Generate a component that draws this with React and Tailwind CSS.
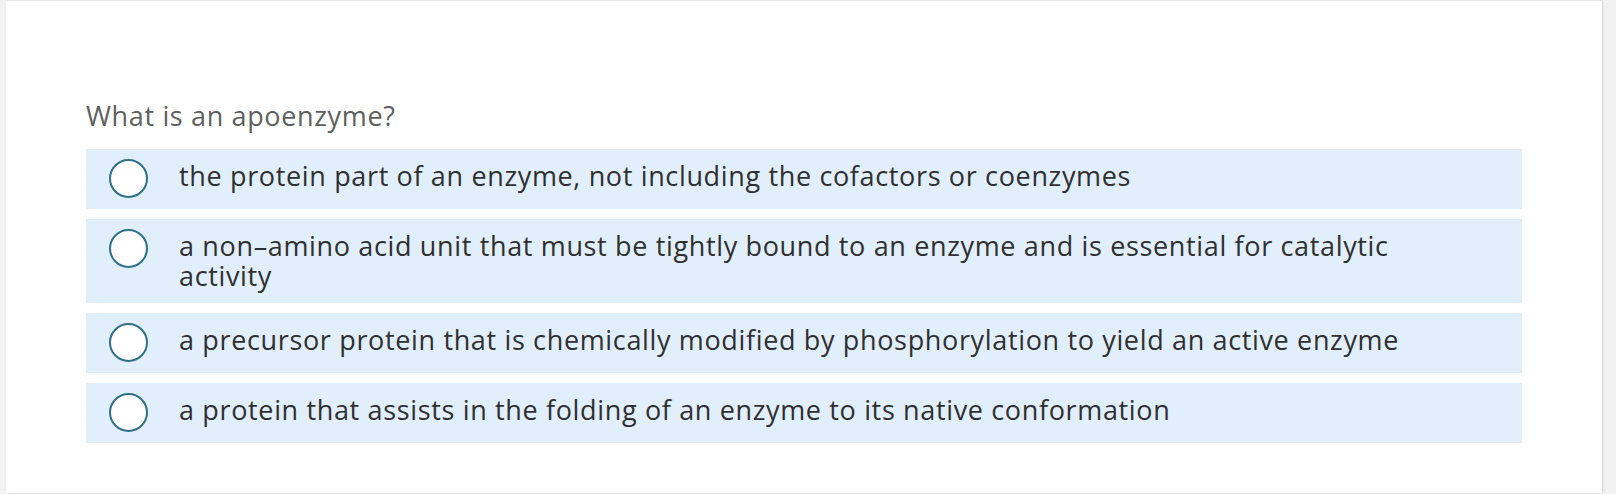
import React, { useState } from 'react';

const options = [
  'the protein part of an enzyme, not including the cofactors or coenzymes',
  'a non\u2013amino acid unit that must be tightly bound to an enzyme and is essential for catalytic activity',
  'a precursor protein that is chemically modified by phosphorylation to yield an active enzyme',
  'a protein that assists in the folding of an enzyme to its native conformation',
];

const Question = () => {
  const [selected, setSelected] = useState(null);

  return (
    <div className="min-h-[494px] bg-[#f2f2f2] pt-px pb-px pl-[6px] pr-[14px]">
      <div className="h-[492px] bg-white px-[80px] pt-[100px] shadow-[1px_0_2px_rgba(0,0,0,0.12)] font-['Open_Sans',sans-serif] text-[27px] font-medium tracking-[0.65px] leading-[30px]">
        {/* Question */}
        <p className="text-[#5f5f5f]">What is an apoenzyme?</p>

        {/* Choices */}
        <ul className="mt-[18px] flex flex-col gap-[10px]">
          {options.map((text, i) => (
            <li
              key={i}
              onClick={() => setSelected(i)}
              className="flex items-start min-h-[60px] bg-[#e1eefc] pl-[23px] pt-[10px] pb-[10px] cursor-pointer"
            >
              <span className="flex h-[39px] w-[39px] shrink-0 items-center justify-center rounded-full border-2 border-[#2d7089] bg-white">
                {selected === i && <span className="h-[19px] w-[19px] rounded-full bg-[#2d7089]" />}
              </span>
              <span className="ml-[31px] flex-1 pt-[2px] pb-[2px] pr-[60px] text-[#303030]">{text}</span>
            </li>
          ))}
        </ul>
      </div>
    </div>
  );
};

export default Question;
